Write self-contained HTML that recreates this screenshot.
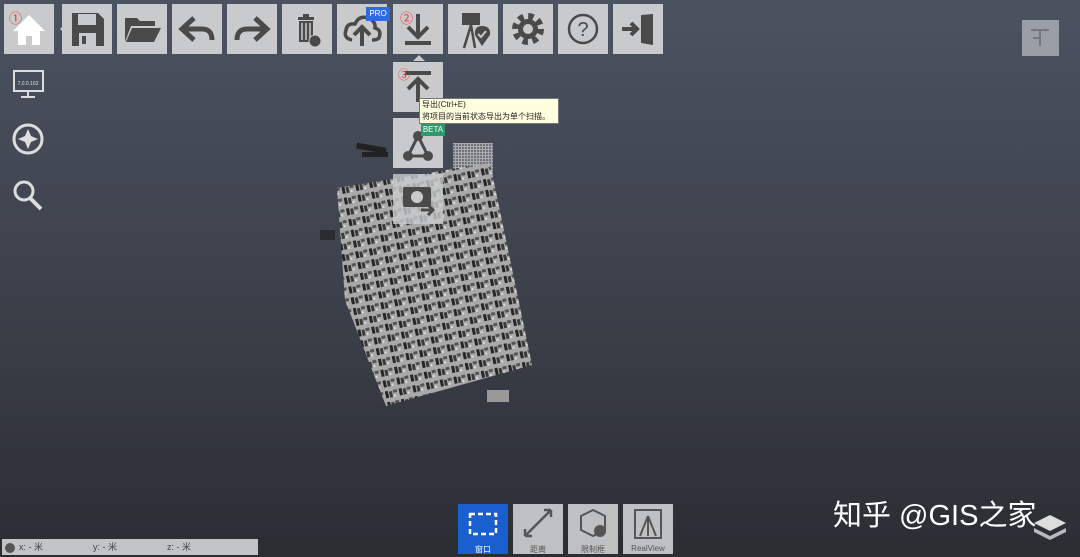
<!DOCTYPE html>
<html><head><meta charset="utf-8"><style>
body{margin:0;width:1080px;height:557px;overflow:hidden;background:linear-gradient(#4b5361,#3a3e47 60%,#2b2d33);font-family:"Liberation Sans","Noto Sans CJK SC",sans-serif;position:relative}
.b{position:absolute;top:4px;width:50px;height:50px;background:#c9cacc}
.b svg{width:50px;height:50px}
.n{position:absolute;color:#e33;font-size:13px}
.bb{position:absolute;top:504px;width:50px;height:50px;background:#bfc0c2;font-size:8px;color:#555;text-align:center}
</style></head><body>
<svg style="position:absolute;left:0;top:0" width="1080" height="557">
<defs><pattern id="p" width="14" height="11" patternUnits="userSpaceOnUse" patternTransform="rotate(-12)"><rect width="14" height="11" fill="#a9a9a9"/><rect x="1" y="1" width="3" height="7" fill="#262626"/><rect x="5" y="2" width="3" height="6" fill="#3a3a3a"/><rect x="9" y="1" width="4" height="3" fill="#555"/><rect x="9" y="6" width="2" height="2" fill="#ddd"/></pattern>
<pattern id="g" width="3" height="3" patternUnits="userSpaceOnUse"><rect width="3" height="3" fill="#aaa"/><rect width="2" height="2" fill="#6f7480"/></pattern></defs>
<rect x="453" y="143" width="40" height="40" fill="url(#g)"/>
<polygon points="337,188 490,163 532,365 386,406 345,300" fill="url(#p)"/>
<g fill="#222"><rect x="356" y="145" width="30" height="6" transform="rotate(10 370 150)"/><rect x="362" y="152" width="26" height="5"/><rect x="320" y="230" width="15" height="10" opacity=".7"/></g>
<rect x="487" y="390" width="22" height="12" fill="#999"/>
<rect x="1022" y="20" width="37" height="36" fill="#9a9ea6"/><path d="M1031 30 H1049 M1040 30 V46 M1033 38 H1039" stroke="#666a72" stroke-width="1.5"/>
<g fill="none" stroke="#ddd" stroke-width="2"><rect x="14" y="71" width="29" height="20"/><path d="M28 92 V96 M21 97 H35" /></g>
<text x="28" y="85" font-size="5" fill="#ddd" text-anchor="middle">7.0.0.163</text>
<circle cx="28" cy="139" r="14" fill="none" stroke="#ddd" stroke-width="3"/><path d="M28 129 L31 136 L38 139 L31 142 L28 149 L25 142 L18 139 L25 136Z" fill="#ddd"/>
<circle cx="24" cy="191" r="9" fill="none" stroke="#ddd" stroke-width="3"/><path d="M30 198 L41 209" stroke="#ddd" stroke-width="4"/>
<g fill="#ddd"><path d="M1050 515 L1066 523 L1050 531 L1034 523Z"/><path d="M1034 528 L1050 536 L1066 528 L1066 532 L1050 540 L1034 532Z" opacity=".8"/></g>
</svg>
<div class="b" style="left:4px"><svg viewBox="0 0 50 50"><path d="M25 11 L41 27 H36 V41 H14 V27 H9Z" fill="#fff"/><rect x="22" y="32" width="6" height="9" fill="#c9cacc"/></svg></div>
<div style="position:absolute;left:54px;top:23px;border:6px solid transparent;border-right-color:#c9cacc"></div>
<div class="b" style="left:62px"><svg viewBox="0 0 50 50"><path d="M10 9 H36 L42 15 V42 H10Z" fill="#4a4a4a"/><rect x="16" y="10" width="18" height="11" fill="#c9cacc"/><rect x="17" y="29" width="17" height="13" fill="#c9cacc"/><rect x="20" y="32" width="4" height="8" fill="#4a4a4a"/></svg></div>
<div class="b" style="left:117px"><svg viewBox="0 0 50 50"><path d="M8 14 H20 L23 17 H38 V22 H14 L8 38Z" fill="#4a4a4a"/><path d="M15 24 H44 L37 38 H9Z" fill="#4a4a4a"/></svg></div>
<div class="b" style="left:172px"><svg viewBox="0 0 50 50"><path d="M22 14 L10 25 L22 36" stroke="#4a4a4a" stroke-width="5" fill="none"/><path d="M12 25 H30 Q40 25 40 36" stroke="#4a4a4a" stroke-width="5" fill="none"/></svg></div>
<div class="b" style="left:227px"><svg viewBox="0 0 50 50"><path d="M28 14 L40 25 L28 36" stroke="#4a4a4a" stroke-width="5" fill="none"/><path d="M38 25 H20 Q10 25 10 36" stroke="#4a4a4a" stroke-width="5" fill="none"/></svg></div>
<div class="b" style="left:282px"><svg viewBox="0 0 50 50"><rect x="16" y="13" width="16" height="3" fill="#4a4a4a"/><rect x="21" y="10" width="6" height="3" fill="#4a4a4a"/><path d="M17 17 H31 V38 H17Z" fill="#4a4a4a"/><path d="M20 19 V36 M24 19 V36 M28 19 V36" stroke="#c9cacc" stroke-width="1.5"/><circle cx="33" cy="37" r="6" fill="#4a4a4a" stroke="#c9cacc"/></svg></div>
<div class="b" style="left:337px"><svg viewBox="0 0 50 50"><path d="M15 36 Q6 34 9 26 Q10 19 18 20 Q22 11 31 14 Q39 17 38 24 Q45 26 42 34 Q40 36 35 36" stroke="#4a4a4a" stroke-width="3.5" fill="none"/><path d="M25 42 V24 M17 31 L25 23 L33 31" stroke="#4a4a4a" stroke-width="4" fill="none"/></svg></div>
<div style="position:absolute;left:366px;top:7px;width:24px;height:14px;background:#2e6be0;color:#fff;font-size:8px;line-height:14px;text-align:center">PRO</div>
<div class="b" style="left:393px"><svg viewBox="0 0 50 50"><path d="M25 10 V32 M15 23 L25 33 L35 23" stroke="#4a4a4a" stroke-width="4" fill="none"/><rect x="12" y="37" width="26" height="4" fill="#4a4a4a"/></svg></div>
<div class="b" style="left:448px"><svg viewBox="0 0 50 50"><rect x="14" y="9" width="18" height="12" fill="#4a4a4a"/><path d="M23 21 L16 44 M23 21 L27 44" stroke="#4a4a4a" stroke-width="2.5"/><path d="M34 22 Q43 22 42 31 L34 42 L27 31 Q26 22 34 22Z" fill="#4a4a4a"/><path d="M30 30 L33 33 L38 27" stroke="#c9cacc" stroke-width="2" fill="none"/></svg></div>
<div class="b" style="left:503px"><svg viewBox="0 0 50 50"><circle cx="25" cy="25" r="12" fill="none" stroke="#4a4a4a" stroke-width="8" stroke-dasharray="5 4.4"/><circle cx="25" cy="25" r="10" fill="#4a4a4a"/><circle cx="25" cy="25" r="5" fill="#c9cacc"/></svg></div>
<div class="b" style="left:558px"><svg viewBox="0 0 50 50"><circle cx="25" cy="25" r="14" fill="none" stroke="#4a4a4a" stroke-width="2.5"/><text x="25" y="32" font-size="20" text-anchor="middle" fill="#4a4a4a" font-family="Liberation Sans">?</text></svg></div>
<div class="b" style="left:613px"><svg viewBox="0 0 50 50"><path d="M28 11 L40 10 V41 L28 39Z" fill="#4a4a4a"/><path d="M9 25 H24 M18 19 L24 25 L18 31" stroke="#4a4a4a" stroke-width="4" fill="none"/></svg></div>
<div class="n" style="left:9px;top:8px">①</div>
<div class="n" style="left:400px;top:8px">②</div>
<div style="position:absolute;left:413px;top:55px;border:6px solid transparent;border-bottom-color:#c9cacc;border-top:0"></div>
<div class="b" style="left:393px;top:62px;height:50px;background:#c9cacc"><svg viewBox="0 0 50 50"><rect x="12" y="9" width="26" height="4" fill="#4a4a4a"/><path d="M25 40 V18 M15 27 L25 17 L35 27" stroke="#4a4a4a" stroke-width="4" fill="none"/></svg></div>
<div class="n" style="left:398px;top:66px;font-size:12px">③</div>
<div class="b" style="left:393px;top:118px;background:#c9cacc"><svg viewBox="0 0 50 50"><path d="M25 18 L15 38 H35Z" stroke="#4a4a4a" stroke-width="3" fill="none"/><circle cx="15" cy="38" r="5" fill="#4a4a4a"/><circle cx="35" cy="38" r="5" fill="#4a4a4a"/><circle cx="25" cy="18" r="5" fill="#4a4a4a"/></svg></div>
<div style="position:absolute;left:421px;top:124px;width:24px;height:12px;background:#2a9a6a;color:#fff;font-size:8px;line-height:12px;text-align:center">BETA</div>
<div class="b" style="left:393px;top:174px;background:rgba(201,202,204,.8)"><svg viewBox="0 0 50 50"><rect x="10" y="13" width="28" height="20" rx="2" fill="#4a4a4a"/><circle cx="24" cy="23" r="6" fill="#c9cacc"/><path d="M28 36 H40 M35 31 L40 36 L35 41" stroke="#4a4a4a" stroke-width="3" fill="none"/></svg></div>
<div style="position:absolute;left:419px;top:98px;width:140px;height:26px;background:#ffffe0;border:1px solid #777;font-size:8px;line-height:12px;color:#222;padding-left:2px;box-sizing:border-box;white-space:nowrap;overflow:hidden">导出(Ctrl+E)<br>将项目的当前状态导出为单个扫描。</div>
<div style="position:absolute;left:833px;top:492px;font-size:29px;color:#fff">知乎 @GIS之家</div>
<div class="bb" style="left:458px;background:#1a5fd0;color:#fff"><svg width="50" height="38" viewBox="0 0 50 38"><rect x="12" y="10" width="26" height="20" fill="none" stroke="#fff" stroke-width="2.5" stroke-dasharray="5 3"/></svg>窗口</div>
<div class="bb" style="left:513px"><svg width="50" height="38" viewBox="0 0 50 38"><path d="M12 32 L38 6 M12 32 V25 M12 32 H19 M38 6 H31 M38 6 V13" stroke="#555" stroke-width="2.5" fill="none"/></svg>距离</div>
<div class="bb" style="left:568px"><svg width="50" height="38" viewBox="0 0 50 38"><path d="M25 6 L37 12 V26 L25 32 L13 26 V12Z" fill="none" stroke="#555" stroke-width="2"/><circle cx="32" cy="27" r="6" fill="#555"/></svg>限制框</div>
<div class="bb" style="left:623px"><svg width="50" height="38" viewBox="0 0 50 38"><rect x="12" y="6" width="26" height="28" fill="none" stroke="#555" stroke-width="2"/><path d="M25 12 L17 32 M25 12 L33 32 M25 12 V32" stroke="#555" stroke-width="2"/></svg>RealView</div>
<div style="position:absolute;left:2px;top:539px;width:256px;height:16px;background:#c2c3c5;font-size:9px;line-height:16px;color:#444"><span style="display:inline-block;width:10px;height:10px;border-radius:50%;background:#555;vertical-align:middle;margin:0 4px 0 3px"></span>x: - 米<span style="margin-left:50px">y: - 米</span><span style="margin-left:50px">z: - 米</span></div>
</body></html>
